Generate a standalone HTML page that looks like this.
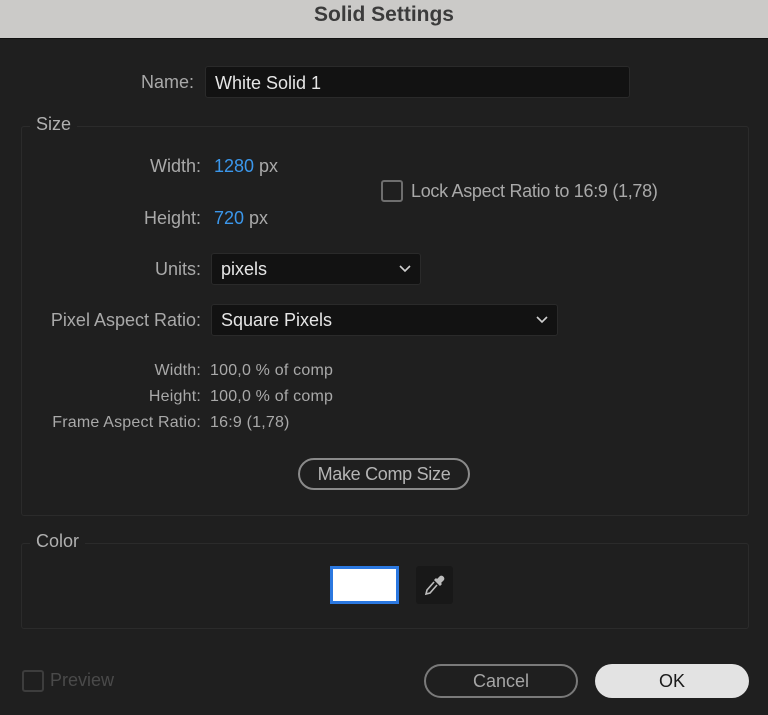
<!DOCTYPE html>
<html><head><style>
*{margin:0;padding:0;box-sizing:border-box}
body{width:768px;height:715px;background:#1f1f1f;font-family:"Liberation Sans",sans-serif;color:#a9a9a9;position:relative;overflow:hidden}
.a{position:absolute;white-space:nowrap}
.l{position:absolute;text-align:right;white-space:nowrap;font-size:18px}
.s{font-size:16px;letter-spacing:0.2px}
.box{position:absolute;border:1px solid #2b2b2b;border-radius:3px}
.inp{position:absolute;background:#121212;border:1px solid #2a2a2a;border-radius:3px;color:#e6e6e6;font-size:18px;padding-left:9px}
.blue{color:#3b97eb}
</style></head><body>
<div class="a" style="left:0;top:0;width:768px;height:39px;background:#cbcac8;border-bottom:1px solid #111"></div>
<div class="a" style="left:0;top:1px;width:768px;text-align:center;color:#3b3b3b;font-weight:bold;font-size:21px;line-height:28px">Solid Settings</div>

<div class="l" style="right:574px;top:72px">Name:</div>
<div class="inp" style="left:205px;top:66px;width:425px;height:32px;line-height:32px">White Solid 1</div>

<div class="box" style="left:21px;top:126px;width:728px;height:390px"></div>
<div class="a" style="left:30px;top:114px;background:#1f1f1f;padding:0 6px;font-size:18px;color:#b0b0b0">Size</div>

<div class="l" style="right:567px;top:156px">Width:</div>
<div class="a" style="left:214px;top:156px;font-size:18px"><span class="blue">1280</span> px</div>
<div class="l" style="right:567px;top:208px">Height:</div>
<div class="a" style="left:214px;top:208px;font-size:18px"><span class="blue">720</span> px</div>
<div class="a" style="left:381px;top:180px;width:22px;height:22px;border:2px solid #6e6e6e;border-radius:3px"></div>
<div class="a" style="left:411px;top:181px;font-size:18px;letter-spacing:-0.3px">Lock Aspect Ratio to 16:9 (1,78)</div>

<div class="l" style="right:567px;top:259px">Units:</div>
<div class="inp" style="left:211px;top:253px;width:210px;height:32px;line-height:31px">pixels</div>
<svg class="a" style="left:399px;top:263px" width="12" height="10"><path d="M1 3l5 5 5-5" stroke="#cfcfcf" stroke-width="1.6" fill="none"/></svg>

<div class="l" style="right:567px;top:310px">Pixel Aspect Ratio:</div>
<div class="inp" style="left:211px;top:304px;width:347px;height:32px;line-height:31px">Square Pixels</div>
<svg class="a" style="left:536px;top:314px" width="12" height="10"><path d="M1 3l5 5 5-5" stroke="#cfcfcf" stroke-width="1.6" fill="none"/></svg>

<div class="l s" style="right:567px;top:362px">Width:</div>
<div class="a s" style="left:210px;top:362px">100,0 % of comp</div>
<div class="l s" style="right:567px;top:388px">Height:</div>
<div class="a s" style="left:210px;top:388px">100,0 % of comp</div>
<div class="l s" style="right:567px;top:414px">Frame Aspect Ratio:</div>
<div class="a s" style="left:210px;top:414px">16:9 (1,78)</div>

<div class="a" style="left:298px;top:458px;width:172px;height:32px;border:2px solid #8a8a8a;border-radius:16px;text-align:center;line-height:28px;font-size:18px;letter-spacing:-0.3px;color:#b5b5b5">Make Comp Size</div>

<div class="box" style="left:21px;top:543px;width:728px;height:86px"></div>
<div class="a" style="left:30px;top:531px;background:#1f1f1f;padding:0 6px;font-size:18px;color:#b0b0b0">Color</div>
<div class="a" style="left:330px;top:566px;width:69px;height:38px;background:#fff;border:3px solid #2b78e0"></div>
<div class="a" style="left:416px;top:566px;width:37px;height:38px;background:#181818;border-radius:3px"></div>
<svg class="a" style="left:420px;top:570px" width="30" height="30" viewBox="0 0 30 30"><path d="M20 6a3 3 0 0 1 4 4l-3 3 1 1-2 2-6-6 2-2 1 1z" fill="#bdbdbd"/><path d="M14 12l-7 8-1 4 4-1 7-8" stroke="#bdbdbd" stroke-width="1.6" fill="none"/></svg>

<div class="a" style="left:22px;top:670px;width:22px;height:22px;border:2px solid #3d3d3d;border-radius:3px"></div>
<div class="a" style="left:50px;top:670px;font-size:18px;color:#4a4a4a">Preview</div>

<div class="a" style="left:424px;top:664px;width:154px;height:34px;border:2px solid #7a7a7a;border-radius:17px;text-align:center;line-height:30px;font-size:18px;color:#a5a5a5">Cancel</div>
<div class="a" style="left:595px;top:664px;width:154px;height:34px;background:#e3e3e3;border-radius:17px;text-align:center;line-height:34px;font-size:18px;color:#1a1a1a">OK</div>
</body></html>
